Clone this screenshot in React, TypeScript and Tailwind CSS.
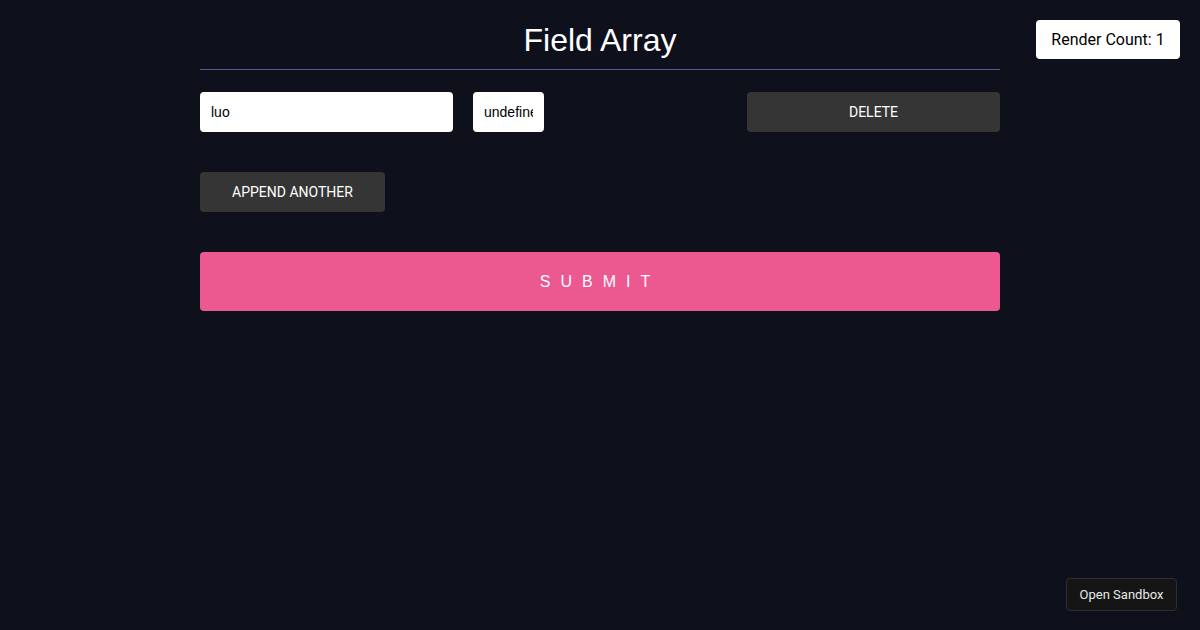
import React from "react";

export default function App() {
  return (
    <div className="relative min-h-[630px] w-full bg-[#0e101c] font-['Liberation_Sans',Arial,sans-serif] text-white">
      <div className="absolute right-[20px] top-[20px] flex h-[39px] w-[144px] items-center justify-center rounded-[4px] bg-white font-['Roboto',sans-serif] text-[16px] text-black">
        Render Count: 1
      </div>
      <div className="mx-auto w-[800px] pt-[22px]">
        <h1 className="border-b border-[rgb(79,98,148)] pb-[10px] text-center text-[32px] font-light leading-[37px] text-white">
          Field Array
        </h1>
        <div className="mt-[22px] flex items-center">
          <input
            defaultValue="luo"
            className="h-[40px] w-[253px] rounded-[4px] border-0 bg-white px-[11px] text-[14px] text-black outline-none"
          />
          <input
            defaultValue="undefined"
            className="ml-[20px] h-[40px] w-[71px] rounded-[4px] border-0 bg-white px-[11px] text-[14px] text-black outline-none"
          />
          <button className="ml-auto h-[40px] w-[253px] rounded-[4px] bg-[#353535] font-['Roboto',sans-serif] text-[14px] text-white">
            DELETE
          </button>
        </div>
        <button className="mt-[40px] h-[40px] w-[185px] rounded-[4px] bg-[#353535] font-['Roboto',sans-serif] text-[14px] text-white">
          APPEND ANOTHER
        </button>
        <button className="mt-[40px] block h-[59px] w-full rounded-[4px] bg-[#ec5990] text-[16px] tracking-[10px] text-white">
          SUBMIT
        </button>
      </div>
      <div className="absolute bottom-[19px] right-[23px] flex h-[33px] w-[111px] items-center justify-center rounded-[4px] border border-[#2e2e2e] bg-[#151515] font-['Roboto',sans-serif] text-[13px] text-[#e8e8e8]">
        Open Sandbox
      </div>
    </div>
  );
}
